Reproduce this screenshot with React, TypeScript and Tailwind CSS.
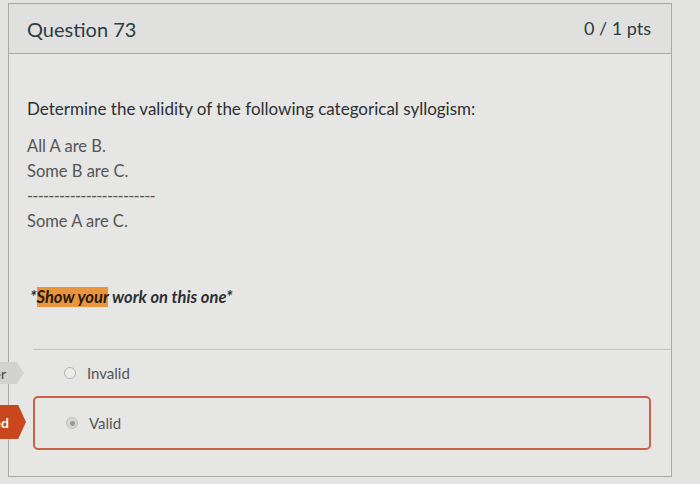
import React from "react";

export default function App() {
  return (
    <div className="relative w-[700px] h-[484px] overflow-hidden bg-[#e3e3e1] pt-[3px] pl-[8px] pr-[28px] pb-[7px] font-['Lato','Liberation_Sans',sans-serif]">
      <div className="h-full border border-[#a9a9a7] bg-[#e6e6e4] flex flex-col">
        <div className="h-[50px] shrink-0 flex items-center justify-between pl-[18px] pr-[20px] bg-[#e0e0de] border-b border-[#a9a9a7]">
          <span className="text-[20px] text-[#2d3b45]">Question 73</span>
          <span className="text-[18px] text-[#2d3b45]">0 / 1 pts</span>
        </div>
        <div className="flex flex-col pl-[18px] pt-[43px]">
          <p className="text-[17px] leading-[24px] text-[#2d3033]">
            Determine the validity of the following categorical syllogism:
          </p>
          <div className="mt-[13px] text-[16.5px] leading-[25px] text-[#555]">
            <p>All A are B.</p>
            <p>Some B are C.</p>
            <p className="tracking-[-0.8px]">------------------------</p>
            <p>Some A are C.</p>
          </div>
          <p className="mt-[51px] ml-[3px] text-[16.5px] leading-[24px] font-bold italic text-[#2d3033]">
            *<span className="bg-[#e8953e] text-[#2a1a0a]">Show your</span> work on this one*
          </p>
        </div>
        <div className="mt-[40px] ml-[24px] border-t border-[#c4c4c2] flex flex-col">
          <div className="h-[46px] flex items-center gap-[11px] pl-[29px] border-2 border-transparent mr-[20px]">
            <span className="w-[12px] h-[12px] rounded-full border border-[#b5b5b3] bg-[#ececea]" />
            <span className="text-[15px] text-[#555]">Invalid</span>
          </div>
          <div className="h-[54px] flex items-center gap-[11px] pl-[31px] border-2 border-[#c8624a] rounded-[5px] mr-[20px]">
            <span className="w-[12px] h-[12px] rounded-full border border-[#c0c0be] bg-[#d6d6d4] flex items-center justify-center">
              <span className="w-[5px] h-[5px] rounded-full bg-[#9a9a98]" />
            </span>
            <span className="text-[15px] text-[#555]">Valid</span>
          </div>
        </div>
      </div>
      <div className="absolute left-0 top-[362px] w-[24px] h-[22px] bg-[#d2d2d0] [clip-path:polygon(0_0,70%_0,100%_50%,70%_100%,0_100%)] overflow-hidden flex items-center justify-end pr-[18px]">
        <span className="text-[14px] text-[#444] whitespace-nowrap">Correct Answer</span>
      </div>
      <div className="absolute left-0 top-[405px] w-[26px] h-[34px] bg-[#c8471f] [clip-path:polygon(0_0,70%_0,100%_50%,70%_100%,0_100%)] overflow-hidden flex items-center justify-end pr-[17px]">
        <span className="text-[14px] font-bold text-white whitespace-nowrap">You Answered</span>
      </div>
    </div>
  );
}
